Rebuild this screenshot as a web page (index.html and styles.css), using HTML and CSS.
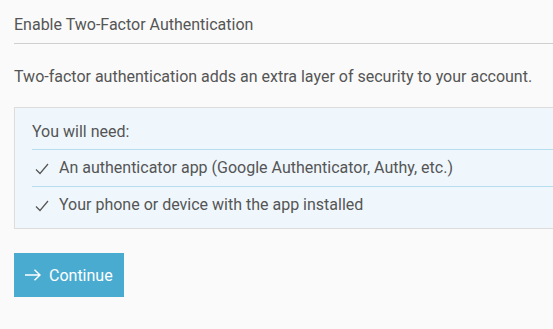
FILE: index.html
```html
<!DOCTYPE html>
<html lang="en">
<head>
  <meta charset="UTF-8">
  <meta name="viewport" content="width=device-width, initial-scale=1.0">
  <title>Enable Two-Factor Authentication</title>
  <link rel="stylesheet" href="styles.css">
</head>
<body>
  <div class="panel">
    <h2 class="panel-title">Enable Two-Factor Authentication</h2>

    <p class="intro">Two-factor authentication adds an extra layer of security to your account.</p>

    <div class="needs">
      <div class="needs-head">You will need:</div>
      <ul class="needs-list">
        <li>
          <svg class="tick" width="14" height="12" viewBox="0 0 14 12"><path d="M1 6.5 L5 10.5 L13 1" fill="none" stroke="#555" stroke-width="1.2"/></svg>
          An authenticator app (Google Authenticator, Authy, etc.)
        </li>
        <li>
          <svg class="tick" width="14" height="12" viewBox="0 0 14 12"><path d="M1 6.5 L5 10.5 L13 1" fill="none" stroke="#555" stroke-width="1.2"/></svg>
          Your phone or device with the app installed
        </li>
      </ul>
    </div>

    <button class="btn-continue" type="button">
      <svg class="arrow" width="16" height="12" viewBox="0 0 16 12"><path d="M0 6 H15 M9.5 0.8 L15 6 L9.5 11.2" fill="none" stroke="#fff" stroke-width="1.4"/></svg>
      Continue
    </button>
  </div>
</body>
</html>
```

FILE: styles.css
```css
html, body {
  margin: 0;
  padding: 0;
  background: #fafafa;
  font-family: Roboto, "Liberation Sans", Arial, sans-serif;
  color: #555;
  overflow: hidden;
}

/* painel maior que a janela, corta à direita */
.panel {
  width: 600px;
  padding: 13px 0 0 14px;
}

.panel-title {
  margin: 0;
  font-size: 16px;
  font-weight: 400;
  line-height: 24px;
  padding-bottom: 6px;
  border-bottom: 1px solid #cfcfcf;
  color: #555;
}

.intro {
  margin: 22px 0 0;
  font-size: 16px;
  line-height: 22px;
}

/* caixa azul clara com a lista */
.needs {
  margin-top: 19px;
  background: #eff7fd;
  border: 1px solid #dcdcdc;
  padding: 0 0 5px 17px;
}

.needs-head {
  font-size: 16px;
  line-height: 22px;
  padding: 13px 0 6px;
  border-bottom: 1px solid #b7def0;
}

.needs-list {
  list-style: none;
  margin: 0;
  padding: 0;
}

.needs-list li {
  font-size: 16px;
  line-height: 22px;
  padding: 7px 0;
  display: flex;
  align-items: center;
}

.needs-list li + li {
  border-top: 1px solid #b7def0;
}

.tick {
  margin: 1px 10px 0 3px;
  flex: none;
}

.btn-continue {
  margin-top: 24px;
  height: 44px;
  padding: 0 11px;
  border: none;
  background: #4aabd1;
  color: #fff;
  font-family: inherit;
  font-size: 16px;
  display: flex;
  align-items: center;
}

.arrow {
  margin-right: 8px;
  flex: none;
}
```
